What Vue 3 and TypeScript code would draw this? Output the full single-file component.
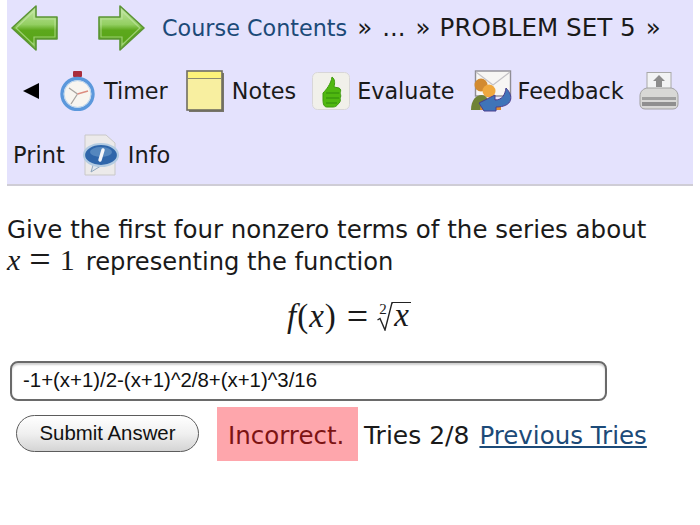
<template>
  <div class="page">
    <nav class="panel">
      <div class="row row-top">
        <svg class="arrow" viewBox="0 0 48 46" aria-label="Back">
          <defs>
            <linearGradient id="arrowFill" x1="0" y1="0" x2="0" y2="1">
              <stop offset="0" stop-color="#c4e6a4" />
              <stop offset="0.42" stop-color="#93cf62" />
              <stop offset="0.55" stop-color="#5da81c" />
              <stop offset="0.8" stop-color="#58a518" />
              <stop offset="1" stop-color="#8cc560" />
            </linearGradient>
          </defs>
          <path d="M1 23 L25 1 L25 12 L46 12 L46 34 L25 34 L25 45 Z" fill="url(#arrowFill)" stroke="#5b9436" stroke-width="1.6" stroke-linejoin="round" />
          <path d="M5 23 L23 6 L23 14 L44 14 L44 32 L23 32 L23 40 Z" fill="none" stroke="#c8e8ac" stroke-opacity="0.6" stroke-width="1.2" />
        </svg>
        <svg class="arrow arrow-next" viewBox="0 0 48 46" aria-label="Next">
          <path d="M47 23 L23 1 L23 12 L2 12 L2 34 L23 34 L23 45 Z" fill="url(#arrowFill)" stroke="#5b9436" stroke-width="1.6" stroke-linejoin="round" />
          <path d="M43 23 L25 6 L25 14 L4 14 L4 32 L25 32 L25 40 Z" fill="none" stroke="#c8e8ac" stroke-opacity="0.6" stroke-width="1.2" />
        </svg>
        <div class="crumbs">
          <span class="link">Course Contents</span>
          <span class="sep">&raquo;</span>
          <span class="sep">...</span>
          <span class="sep">&raquo;</span>
          <span class="current">PROBLEM SET 5</span>
          <span class="sep">&raquo;</span>
        </div>
      </div>

      <div class="row row-tools">
        <span class="triangle"></span>
        <svg class="icon timer" viewBox="0 0 36 40">
          <rect x="13" y="0" width="9" height="6" rx="1" fill="#a92c3c" />
          <circle cx="17.5" cy="23" r="15.5" fill="#f8f5f0" stroke="#5b98dc" stroke-width="3.4" />
          <circle cx="17.5" cy="23" r="13.4" fill="none" stroke="#b9d4ee" stroke-width="1" />
          <path d="M17.5 23 L9 17 M17.5 23 L11 33" stroke="#a8a4a0" stroke-width="1.3" fill="none" />
          <path d="M17.5 23 L28 20" stroke="#dc8c80" stroke-width="1.5" fill="none" />
        </svg>
        <span class="tool-label">Timer</span>
        <svg class="icon notes" viewBox="0 0 38 42">
          <rect x="3" y="3" width="35" height="39" fill="#77756a" />
          <rect x="1" y="1" width="35" height="39" fill="#f8efa0" stroke="#6f6d60" stroke-width="1.6" />
          <rect x="2" y="2" width="33" height="6" fill="#fdf27a" />
          <path d="M1 8.5 H36" stroke="#8c8a70" stroke-width="1" />
        </svg>
        <span class="tool-label">Notes</span>
        <svg class="icon thumb" viewBox="0 0 38 38">
          <rect x="0.5" y="0.5" width="37" height="37" rx="5" fill="#f1f0ea" stroke="#d8d6d8" />
          <path d="M20 5 C23 7 23 11 22 15 L27 16 C29 17 29 19 28 21 C29 23 29 25 28 26 C29 28 28 31 26 32 C25 34 23 35 21 35 L15 35 C12 35 11 32 11 28 L11 21 C14 18 19 12 20 5 Z" fill="#50b810" stroke="#3f9a0e" stroke-width="1" />
          <path d="M14 21 H27 M14 26 H27 M14 31 H25" stroke="#2f8a0a" stroke-width="1.2" />
        </svg>
        <span class="tool-label">Evaluate</span>
        <svg class="icon feedback" viewBox="0 0 42 42">
          <rect x="4.5" y="1" width="35" height="25" fill="#f7f6f4" stroke="#8f8d94" stroke-width="1.4" />
          <path d="M5 2 L22 15 L39 2" fill="none" stroke="#c4c2c6" stroke-width="1.2" />
          <path d="M0 40 C0 25 12 22 16 28 L16 40 Z" fill="#6f8236" />
          <circle cx="10" cy="15" r="6.5" fill="#d28a30" />
          <path d="M9 40 C9 28 28 24 30 36 L30 40 Z" fill="#e08c2e" />
          <circle cx="18" cy="21" r="6.5" fill="#efa83e" />
          <path d="M13 41 L8 33 L24 25 L24 30 C31 30 34 25 35 18 C43 26 42 37 25 37 L25 41 Z" fill="#3f74b8" stroke="#4b3f8f" stroke-width="1" />
        </svg>
        <span class="tool-label">Feedback</span>
        <svg class="icon printer" viewBox="0 0 40 38">
          <rect x="8" y="0.5" width="24" height="18" fill="#f2f3f4" stroke="#a8a8a8" />
          <path d="M20 3 L26 9 H23 V15 H17 V9 H14 Z" fill="#8c8c8c" />
          <path d="M1 24 C1 19 5 16 9 16 H31 C35 16 39 19 39 24 V32 C39 35 37 37 34 37 H6 C3 37 1 35 1 32 Z" fill="#d8d8d6" stroke="#a0a0a0" />
          <rect x="3" y="25" width="34" height="3" fill="#a0a0a0" />
          <rect x="3" y="30" width="34" height="4" fill="#8f8f8f" />
        </svg>
      </div>

      <div class="row row-last">
        <span class="tool-label print">Print</span>
        <svg class="icon info" viewBox="0 0 38 42">
          <path d="M3 1 H24 L33 9 V41 H3 Z" fill="#eceaea" stroke="#c9c8c8" />
          <path d="M12 28 L9 38 L22 30" fill="#dfe6ee" stroke="#8fa6bc" />
          <ellipse cx="19" cy="21" rx="17" ry="11" fill="#2f66aa" stroke="#b4cce2" stroke-width="2.2" />
          <ellipse cx="19" cy="18" rx="11" ry="5" fill="#6f9ccc" opacity="0.6" />
          <path d="M21 16 L18 26" stroke="#f4f6fa" stroke-width="3.4" stroke-linecap="round" />
        </svg>
        <span class="tool-label">Info</span>
      </div>
    </nav>

    <main class="body">
      <p class="question">
        Give the first four nonzero terms of the series about<br />
        <span class="math-inline"><i>x</i><span class="eq">=</span>1</span><span class="rest">representing the function</span>
      </p>

      <div class="formula">
        <span class="fx"><i>f</i>(<i>x</i>)</span>
        <span class="eq">=</span>
        <span class="root">
          <sup>2</sup>
          <svg viewBox="0 0 16 29" class="radical">
            <path d="M0.5 18 L3 16.5 L8 28 L15 0.7 H16" fill="none" stroke="#222" stroke-width="1.4" />
          </svg>
          <i class="radicand">x</i>
        </span>
      </div>

      <div class="answer">-1+(x+1)/2-(x+1)^2/8+(x+1)^3/16</div>

      <div class="submit-row">
        <button class="submit" type="button">Submit Answer</button>
        <span class="incorrect">Incorrect.</span>
        <span class="tries">Tries 2/8</span>
        <span class="previous">Previous Tries</span>
      </div>
    </main>
  </div>
</template>

<script setup lang="ts">
</script>

<style>
html,
body {
  background: #fff;
}
</style>

<style scoped>
.page {
  width: 700px;
  height: 525px;
  overflow: hidden;
  font-family: "DejaVu Sans", Verdana, sans-serif;
  font-size: 24.5px;
  color: #1a1a1a;
}

.panel {
  margin: 0 7px;
  height: 186px;
  box-sizing: border-box;
  background: #e4e2fd;
  border-bottom: 2px solid #cfcdd6;
}

.row {
  display: flex;
  align-items: center;
}

.row-top {
  height: 55px;
  padding-left: 4px;
}

.arrow {
  width: 48px;
  height: 46px;
  flex: none;
  filter: blur(0.4px);
}

.arrow-next {
  margin-left: 38px;
}

.crumbs {
  display: flex;
  align-items: center;
  margin-left: 17px;
  white-space: nowrap;
}

.link {
  color: #1c4a78;
  font-size: 22.3px;
}

.sep {
  font-size: 24.5px;
  margin-left: 10px;
}

.current {
  font-size: 24.6px;
  margin-left: 9px;
}

.row-tools {
  height: 71px;
  padding-left: 16px;
  font-size: 22.3px;
}

.triangle {
  width: 0;
  height: 0;
  border-top: 8px solid transparent;
  border-bottom: 8px solid transparent;
  border-right: 16px solid #000;
  margin-right: 21px;
}

.icon {
  flex: none;
  filter: blur(0.4px);
}

.timer {
  width: 36px;
  height: 40px;
  margin-right: 8px;
}

.notes {
  width: 38px;
  height: 42px;
  margin-left: 18px;
  margin-right: 8px;
}

.thumb {
  width: 38px;
  height: 38px;
  margin-left: 16px;
  margin-right: 7px;
}

.feedback {
  width: 42px;
  height: 42px;
  margin-left: 16px;
  margin-right: 5px;
}

.printer {
  width: 40px;
  height: 38px;
  margin-left: 15px;
}

.row-last {
  height: 58px;
  padding-left: 6px;
  font-size: 22.5px;
}

.info {
  width: 38px;
  height: 42px;
  margin-left: 17px;
  margin-right: 8px;
}

.body {
  padding: 0 7px;
}

.question {
  margin: 28px 0 0;
  line-height: 32px;
  white-space: nowrap;
}

.math-inline {
  font-family: "Liberation Serif", serif;
  font-size: 30px;
  line-height: 0;
  margin-right: 11px;
}

.rest {
  font-size: 24.2px;
}

.eq {
  font-family: "Liberation Serif", serif;
  font-size: 38px;
  line-height: 0;
}

.math-inline .eq {
  margin: 0 9px;
  vertical-align: -2px;
}

.formula {
  display: flex;
  align-items: center;
  gap: 10px;
  height: 44px;
  margin-top: 16px;
  padding-left: 280px;
  font-family: "Liberation Serif", serif;
  font-size: 33px;
  white-space: pre;
}

.fx {
  letter-spacing: 1px;
}

.formula .eq {
  margin-right: -1px;
}

.root {
  position: relative;
  display: inline-flex;
  align-items: flex-start;
}

.root sup {
  position: absolute;
  left: 2px;
  top: 0;
  font-size: 15px;
  line-height: 15px;
}

.radical {
  width: 16px;
  height: 29px;
  flex: none;
}

.radicand {
  border-top: 1.4px solid #222;
  line-height: 25px;
  padding: 0 2px 0 1px;
}

.answer {
  margin-top: 23px;
  width: 597px;
  height: 40px;
  box-sizing: border-box;
  margin-left: 3px;
  padding-left: 11px;
  line-height: 34px;
  border: 2px solid #6a6a6a;
  border-radius: 8px;
  box-shadow: inset 0 2px 2px #d0d0d0;
  font-family: "Liberation Sans", Arial, sans-serif;
  font-size: 20.4px;
  color: #111;
}

.submit-row {
  display: flex;
  align-items: center;
  height: 55px;
  margin-top: 5px;
  padding-left: 9px;
  white-space: nowrap;
}

.submit {
  width: 183px;
  height: 37px;
  box-sizing: border-box;
  padding: 0;
  border: 1.5px solid #5c5c5c;
  border-radius: 19px;
  background: linear-gradient(#ffffff, #f0f0f0 50%, #d4d4d4);
  font-family: "Liberation Sans", Arial, sans-serif;
  font-size: 20.4px;
  color: #111;
}

.incorrect {
  display: flex;
  align-items: center;
  box-sizing: border-box;
  width: 141px;
  height: 54px;
  margin-left: 18px;
  padding: 4px 0 0 11px;
  background: #fea6ac;
  color: #7c1414;
}

.tries {
  margin: 4px 0 0 6px;
  font-size: 25px;
}

.previous {
  margin: 4px 0 0 10px;
  color: #1c4a78;
  text-decoration: underline;
}
</style>
